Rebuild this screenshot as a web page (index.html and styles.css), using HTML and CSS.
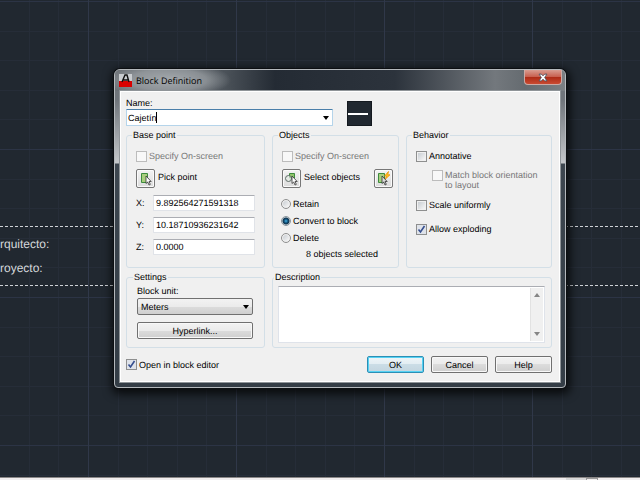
FILE: index.html
```html
<!DOCTYPE html>
<html lang="en">
<head>
    <meta charset="UTF-8">
    <title>Block Definition</title>
    <link rel="stylesheet" href="styles.css">
</head>
<body>
    <!-- Drawing area -->
    <main class="canvas">
        <div class="title-block">
            <p>rquitecto:</p>
            <p>royecto:</p>
        </div>
    </main>
    <div class="command-bar"><span class="grip"></span><span class="scroll-tab"></span></div>

    <!-- Dialog -->
    <form class="dialog">
        <header class="titlebar">
            <svg class="logo" viewBox="0 0 13 13">
                <rect width="13" height="13" fill="#c9cccf"/>
                <rect y="7" width="13" height="6" fill="#d90000"/>
                <path d="M3 8L6 1H8L10 8M4 6H9" fill="none" stroke="#111" stroke-width="1.4"/>
            </svg>
            <h1>Block Definition</h1>
            <button type="button" class="close" aria-label="Close">
                <svg viewBox="0 0 10 8"><path d="M1.5 1H3.5L5 2.5L6.5 1H8.5L6.5 4L8.5 7H6.5L5 5.5L3.5 7H1.5L3.5 4Z" fill="#fff" stroke="#4d5260" stroke-width=".8"/></svg>
            </button>
        </header>

        <div class="client">
            <div class="name-row">
                <div class="name-field">
                    <label for="name">Name:</label>
                    <div class="combo">
                        <input type="text" id="name" value="Cajetín">
                        <span class="caret"></span>
                        <button type="button" aria-label="Show blocks"><svg viewBox="0 0 6 4"><path d="M0 0H6L3 4Z"/></svg></button>
                    </div>
                </div>
                <div class="preview"></div>
            </div>

            <div class="groups">
                <fieldset class="base">
                    <legend>Base point</legend>
                    <label class="check off"><input type="checkbox" disabled>Specify On-screen</label>
                    <div class="pick">
                        <button type="button" class="icon-btn" id="pick">
                            <svg viewBox="0 0 15 15">
                                <path d="M3.5 2.5H9.5V11.5H3.5Z" fill="#a9cf7d" stroke="#3d8b3d"/>
                                <path d="M8 5V12.5L9.7 11L11 14L12.3 13.4L11 10.5H13.2Z" fill="#fff" stroke="#333" stroke-width=".8"/>
                            </svg>
                        </button>
                        <label for="pick">Pick point</label>
                    </div>
                    <div class="coords">
                        <label for="x">X:</label><input type="text" id="x" value="9.892564271591318">
                        <label for="y">Y:</label><input type="text" id="y" value="10.18710936231642">
                        <label for="z">Z:</label><input type="text" id="z" value="0.0000">
                    </div>
                </fieldset>

                <fieldset class="objects">
                    <legend>Objects</legend>
                    <label class="check off"><input type="checkbox" disabled>Specify On-screen</label>
                    <div class="pick">
                        <button type="button" class="icon-btn" id="select">
                            <svg viewBox="0 0 15 15">
                                <path d="M5.5 2.5H10.5V7H5.5Z" fill="#8fc46a" stroke="#3d8b3d"/>
                                <circle cx="4.5" cy="7.5" r="3" fill="#e4ebe4" fill-opacity=".7" stroke="#5d6b66"/>
                                <path d="M8 5V12.5L9.7 11L11 14L12.3 13.4L11 10.5H13.2Z" fill="#fff" stroke="#333" stroke-width=".8"/>
                            </svg>
                        </button>
                        <label for="select">Select objects</label>
                        <button type="button" class="icon-btn quick" aria-label="Quick select">
                            <svg viewBox="0 0 15 15">
                                <path d="M2.5 2.5H8.5V11.5H2.5Z" fill="#a9cf7d" stroke="#3d8b3d"/>
                                <path d="M12.5 .5L8.5 5H10.5L9 8.5L14 3.8H11.8Z" fill="#ffc21c" stroke="#e88a00" stroke-width=".7"/>
                                <path d="M6 5V12.5L7.7 11L9 14L10.3 13.4L9 10.5H11.2Z" fill="#ddd" stroke="#333" stroke-width=".8"/>
                            </svg>
                        </button>
                    </div>
                    <div class="radios">
                        <label class="check"><input type="radio" name="mode">Retain</label>
                        <label class="check"><input type="radio" name="mode" checked>Convert to block</label>
                        <label class="check"><input type="radio" name="mode">Delete</label>
                    </div>
                    <p class="count">8 objects selected</p>
                </fieldset>

                <fieldset class="behavior">
                    <legend>Behavior</legend>
                    <label class="check"><input type="checkbox">Annotative</label>
                    <label class="check off sub"><input type="checkbox" disabled><span>Match block orientation<br>to layout</span></label>
                    <label class="check scale"><input type="checkbox">Scale uniformly</label>
                    <label class="check"><input type="checkbox" checked>Allow exploding</label>
                </fieldset>

                <fieldset class="settings">
                    <legend>Settings</legend>
                    <label for="unit">Block unit:</label>
                    <select id="unit"><option>Meters</option></select>
                    <button type="button" class="btn">Hyperlink...</button>
                </fieldset>

                <fieldset class="description">
                    <legend>Description</legend>
                    <div class="memo">
                        <textarea aria-label="Description"></textarea>
                        <div class="scrollbar">
                            <svg viewBox="0 0 6 4"><path d="M0 4H6L3 0Z"/></svg>
                            <svg viewBox="0 0 6 4"><path d="M0 0H6L3 4Z"/></svg>
                        </div>
                    </div>
                </fieldset>
            </div>

            <footer class="actions">
                <label class="check"><input type="checkbox" checked>Open in block editor</label>
                <button type="button" class="btn default">OK</button>
                <button type="button" class="btn">Cancel</button>
                <button type="button" class="btn">Help</button>
            </footer>
        </div>
    </form>
</body>
</html>
```

FILE: styles.css
```css
* {
    margin: 0;
    padding: 0;
    box-sizing: border-box;
}

body {
    display: flex;
    flex-direction: column;
    height: 100vh;
    overflow: hidden;
    position: relative;
    font: 9px/12px "Liberation Sans", Arial, sans-serif;
    text-rendering: geometricPrecision;
    color: #000;
}

input, select, button, textarea {
    font: inherit;
    color: inherit;
    text-rendering: inherit;
}

svg {
    display: block;
}

/* Drawing area with major and minor grid */
.canvas {
    flex: 1;
    padding-top: 226px;
    background-color: #212830;
    background-image:
        linear-gradient(90deg, #303849 1px, transparent 1px),
        linear-gradient(#2c3445 1px, transparent 1px),
        repeating-linear-gradient(90deg, #262d38 0 1px, transparent 1px 20%),
        repeating-linear-gradient(#262d38 0 1px, transparent 1px 20%);
    background-size: 148px 148px;
    background-position: 88px 1px;
}

.title-block {
    height: 60px;
    padding-top: 6px;
    background:
        repeating-linear-gradient(90deg, #cfd2d6 0 3px, transparent 3px 5px) top / 100% 1px no-repeat,
        repeating-linear-gradient(90deg, #cfd2d6 0 3px, transparent 3px 5px) bottom / 100% 1px no-repeat;
    font: 12px/24px "Liberation Sans", sans-serif;
    color: #d5d8db;
}

.command-bar {
    display: flex;
    justify-content: flex-end;
    height: 3px;
    padding-right: 42px;
    border-top: 1px solid #8b8888;
    background: #f1eeee;
}

.grip {
    width: 20px;
    background: #d9d9d9;
}

.scroll-tab {
    width: 12px;
    border: 1px solid #999;
    border-bottom: 0;
}

/* Dialog window */
.dialog {
    position: absolute;
    top: 69px;
    left: 114px;
    width: 452px;
    padding: 0 5px 5px;
    border: 1px solid #b4b8bc;
    border-radius: 6px 6px 4px 4px;
    background: linear-gradient(#70757b 0, #70757b 30px, #c4c7ca 93px, #3d464f 94px, #343d46 100%);
    box-shadow: 0 0 0 1px #0c0f12, 1px 3px 10px 3px rgba(0, 0, 0, .75);
}

.titlebar {
    display: flex;
    align-items: center;
    gap: 4px;
    height: 21px;
    margin: 0 -5px;
    padding-left: 4px;
    border-radius: 5px 5px 0 0;
    background:
        radial-gradient(62px 18px at 54px 10px, #a4a9ad, rgba(160, 165, 169, .7) 60%, transparent),
        linear-gradient(90deg, #6d7277 0, #4b5259 110px, #242b34 160px, #2c333c 280px, #73787d 380px, #656b70 410px, #7b8084 100%);
}

.logo {
    width: 13px;
    height: 13px;
}

.titlebar h1 {
    font: 9px/12px "Open Sans", sans-serif;
    color: #000;
}

.close {
    align-self: flex-start;
    display: flex;
    align-items: center;
    justify-content: center;
    width: 38px;
    height: 15px;
    margin: 0 3px 0 auto;
    border: 1px solid #cbaaa5;
    border-top: 0;
    border-radius: 0 0 4px 4px;
    background: linear-gradient(#d99c90 0, #c8604f 48%, #ad2b16 50%, #c94a31 100%);
}

.close svg {
    width: 12px;
    height: 9px;
}

.client {
    padding: 3px 7px 8px 5px;
    border: 1px solid #fff;
    outline: 1px solid #8f9498;
    background: #f0f0f0;
}

/* Name */
.name-row {
    display: flex;
    align-items: flex-end;
    gap: 14px;
    height: 31px;
}

.name-field {
    width: 207px;
}

.combo {
    position: relative;
    display: flex;
    height: 17px;
    border: 1px solid #b5d4ea;
    border-top-color: #4a7faa;
    border-radius: 1px;
    background: #fff;
}

.combo input {
    flex: 1;
    min-width: 0;
    padding-left: 1px;
    border: 0;
    background: none;
    outline: 0;
}

.combo button {
    display: flex;
    align-items: center;
    width: 9px;
    border: 0;
    background: none;
}

.combo svg {
    width: 6px;
    height: 4px;
}

.caret {
    position: absolute;
    top: 2px;
    left: 29px;
    width: 1px;
    height: 11px;
    background: #000;
}

.preview {
    width: 25px;
    height: 25px;
    border: 1px solid #14191f;
    background: linear-gradient(#fff, #fff) 0 11px / 20px 2px no-repeat #212830;
}

/* Groups */
.groups {
    display: grid;
    grid-template-columns: 139fr 127fr 146fr;
    gap: 3px 7px;
    margin-top: 3px;
}

fieldset {
    min-width: 0;
    padding: 9px 9px 8px;
    border: 1px solid #d3dfe7;
    border-radius: 3px;
}

.base, .objects, .behavior {
    height: 139px;
}

legend {
    margin-left: -4px;
    padding: 0 1px;
}

.check {
    display: flex;
    align-items: center;
    gap: 2px;
    height: 12px;
    white-space: nowrap;
}

.off {
    color: #777;
}

input[type="checkbox"], input[type="radio"] {
    appearance: none;
    flex: none;
    width: 11px;
    height: 11px;
    border: 1px solid #8e8f8f;
    background: linear-gradient(135deg, #c9ced3, #f6f6f6) content-box #f4f4f4;
    padding: 1px;
}

input[type="checkbox"]:disabled {
    border-color: #bcbcbc;
    background: #f8f8f8;
}

input[type="checkbox"]:checked {
    padding: 0;
    background: url("data:image/svg+xml,%3Csvg xmlns='http://www.w3.org/2000/svg' viewBox='0 0 9 9'%3E%3Cpath d='M1.5 4.5L3.5 7L7.5 1' fill='none' stroke='%23364f8f' stroke-width='1.6'/%3E%3C/svg%3E") #dfe3ea;
}

input[type="radio"] {
    width: 10px;
    height: 10px;
    border-radius: 50%;
}

input[type="radio"]:checked {
    border-color: #8a959d;
    padding: 0;
    background: radial-gradient(circle, #43b4e4 0, #0f4a73 2px, #12364f 3px, #d9e0e5 4px);
}

.pick {
    display: flex;
    gap: 3px;
    height: 19px;
    margin: 7px 0;
}

.pick label {
    padding-top: 2px;
}

.icon-btn {
    width: 19px;
    height: 19px;
    padding: 1px;
    border: 1px solid #777;
    border-radius: 2px;
    background: linear-gradient(#f3f3f3, #dcdcdc);
    box-shadow: inset 0 0 0 1px #fafafa;
}

.quick {
    margin-left: auto;
    margin-right: -4px;
}

.coords {
    display: grid;
    grid-template-columns: 17px 1fr;
    gap: 6px 0;
    align-items: center;
}

.coords input {
    min-width: 0;
    height: 16px;
    padding-left: 2px;
    border: 1px solid #e0e3e8;
    border-top-color: #abadb3;
    border-radius: 1px;
    background: #fff;
}

.radios {
    display: grid;
    gap: 5px;
    margin: 10px 0 0 -1px;
}

.count {
    margin: 4px 0 0 24px;
}

.sub {
    align-items: flex-start;
    height: 24px;
    margin: 8px 0 5px 16px;
    line-height: 10px;
}

.scale {
    margin-bottom: 12px;
}

/* Settings and description */
.settings, .description {
    height: 77px;
}

.settings {
    display: grid;
    padding: 2px 11px 7px 10px;
}

.description {
    grid-column: span 2;
    padding: 3px 6px 3px 5px;
}

select {
    appearance: none;
    height: 17px;
    padding: 0 3px;
    border: 1px solid #707070;
    border-radius: 2px;
    background: url("data:image/svg+xml,%3Csvg xmlns='http://www.w3.org/2000/svg' viewBox='0 0 6 4'%3E%3Cpath d='M0 0H6L3 4Z'/%3E%3C/svg%3E") right 3px center / 6px 4px no-repeat, linear-gradient(#f2f2f2 0, #ebebeb 50%, #dcdcdc 50%, #cfcfcf 100%);
}

.btn {
    height: 17px;
    border: 1px solid #707070;
    border-radius: 2px;
    background: linear-gradient(#f2f2f2 0, #ebebeb 50%, #dcdcdc 50%, #cfcfcf 100%);
    box-shadow: inset 0 0 0 1px #f8f8f8;
}

.settings .btn {
    margin-top: 6px;
}

.memo {
    display: flex;
    height: 57px;
    padding: 1px;
    border: 1px solid #dfe3ea;
    border-top-color: #abadb3;
    background: #fff;
}

textarea {
    flex: 1;
    min-width: 0;
    border: 0;
    resize: none;
}

.scrollbar {
    display: flex;
    flex-direction: column;
    align-items: center;
    justify-content: space-between;
    width: 13px;
    padding: 5px 0;
    border-left: 1px solid #e2e2e2;
    background: #f0f0f0;
    fill: #858585;
}

.scrollbar svg {
    width: 6px;
    height: 4px;
}

/* Actions */
.actions {
    display: flex;
    align-items: center;
    gap: 7px;
    margin-top: 8px;
}

.actions .check {
    margin-right: auto;
}

.actions .btn {
    width: 57px;
}

.actions .default {
    border-color: #2c8fb5;
    background: linear-gradient(#eef5f8 0, #e2edf2 50%, #cbdde6 50%, #c3d5df 100%);
    box-shadow: inset 0 0 0 1px #56d2f4;
}
```
